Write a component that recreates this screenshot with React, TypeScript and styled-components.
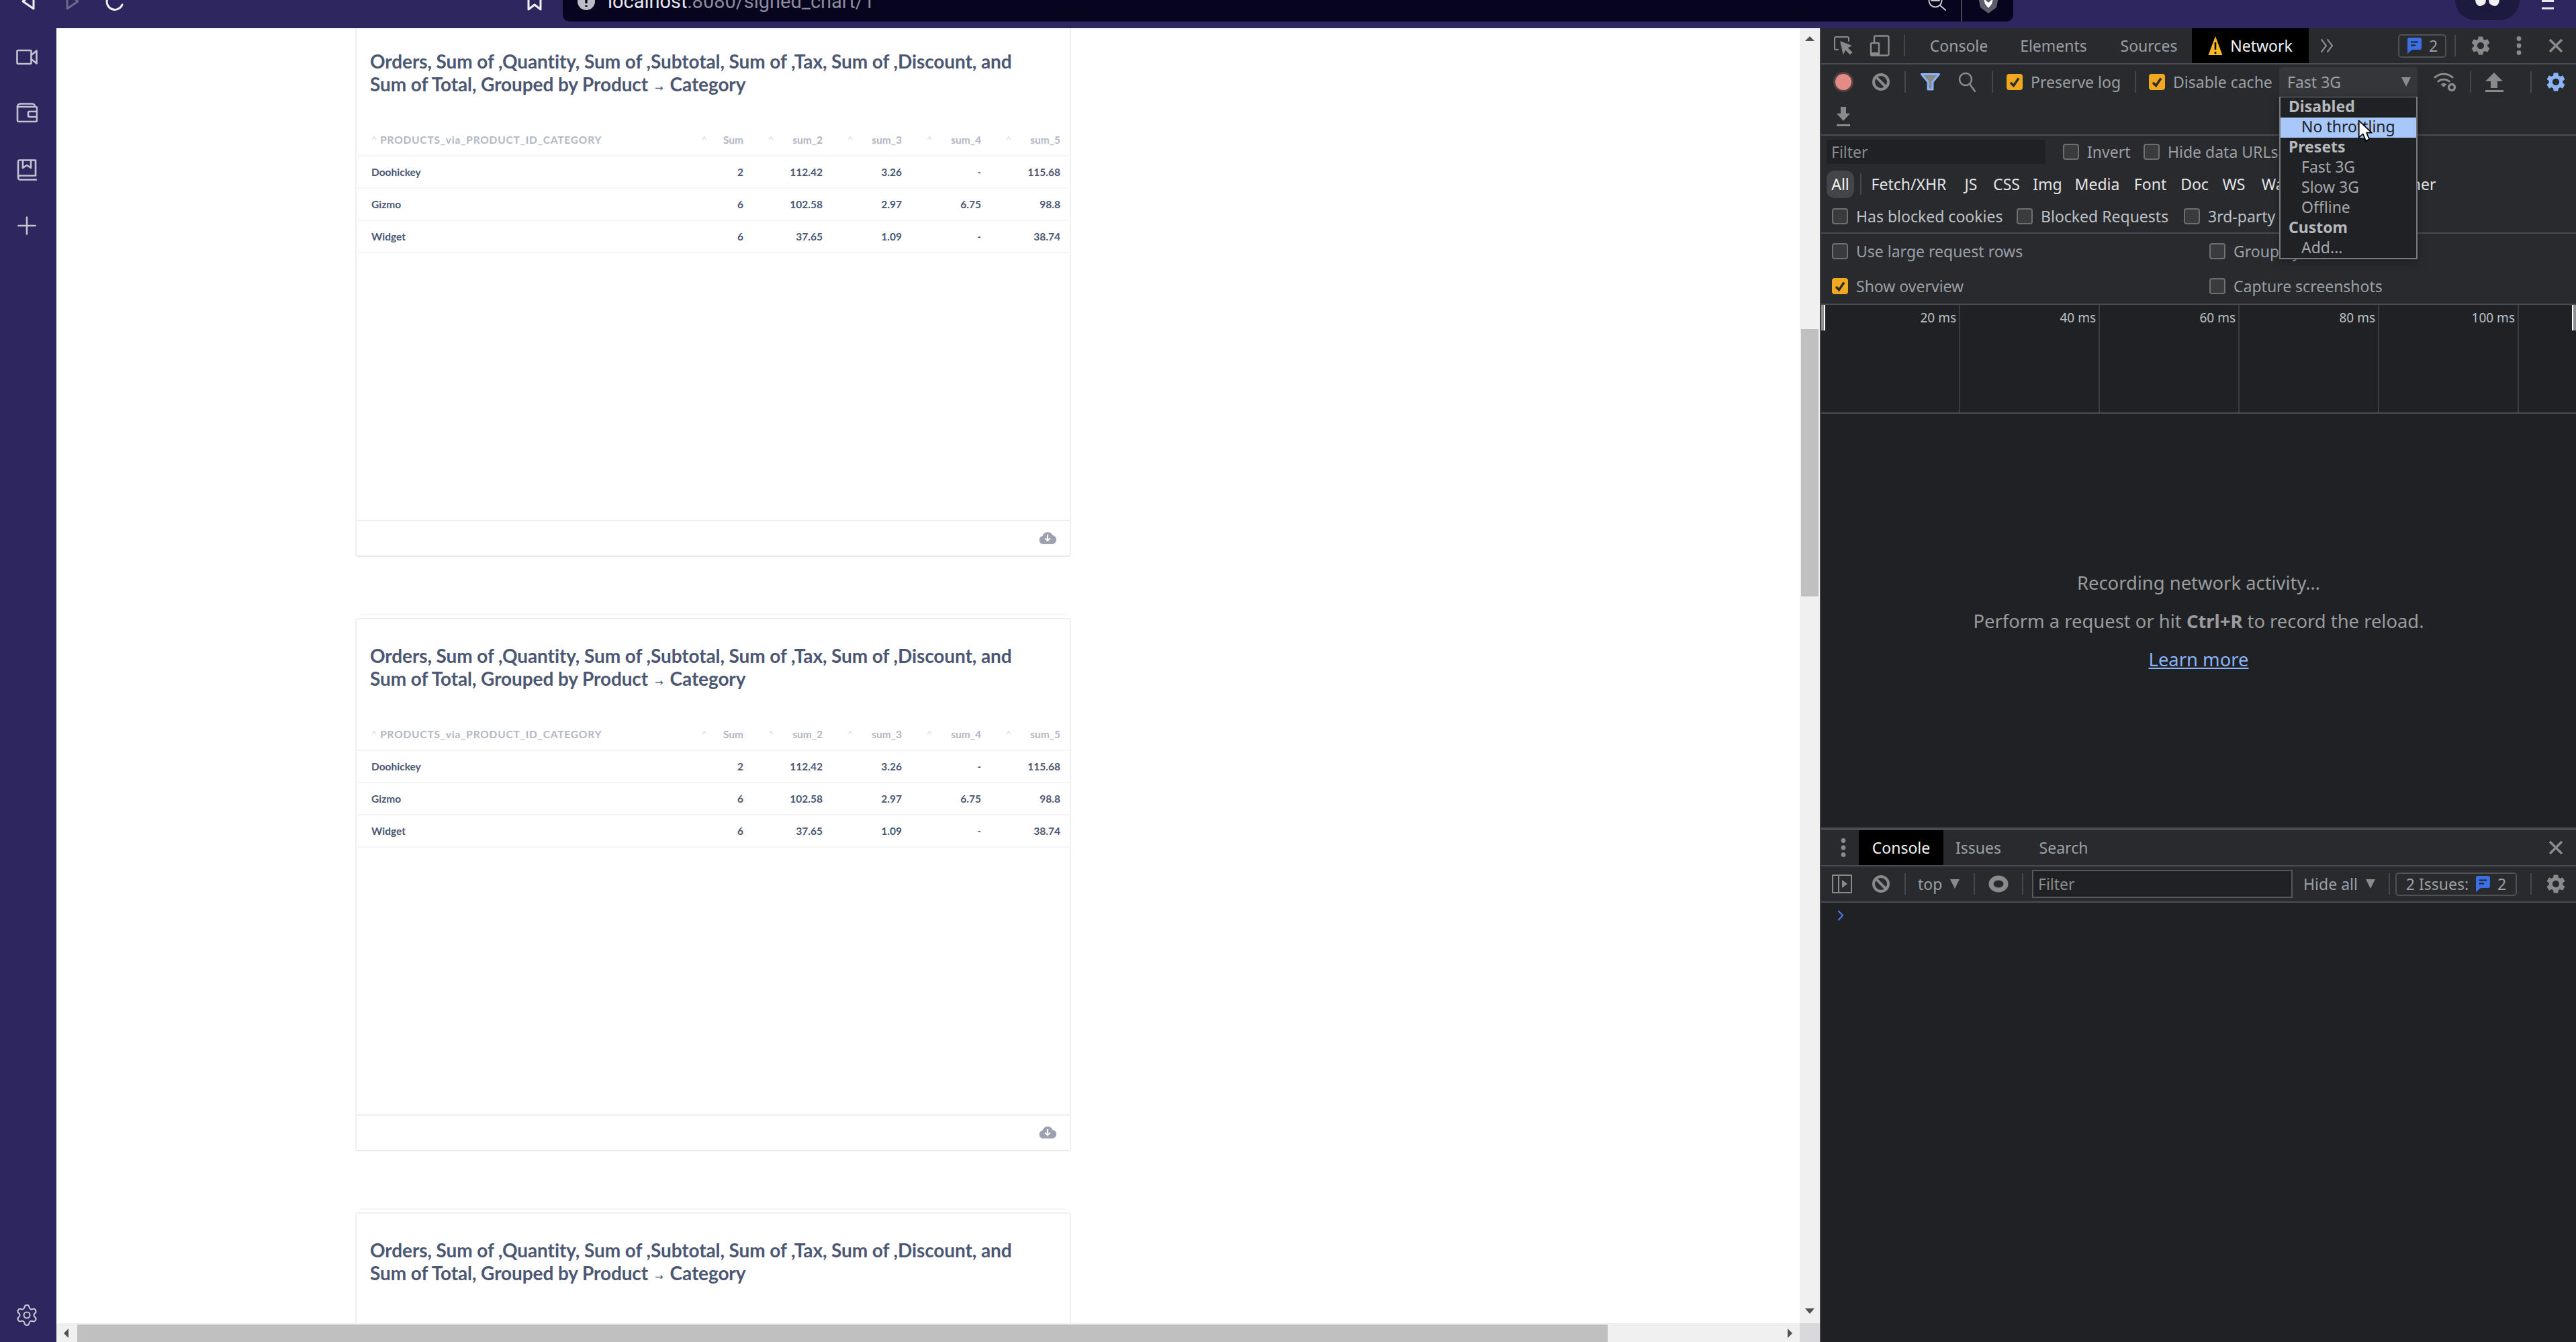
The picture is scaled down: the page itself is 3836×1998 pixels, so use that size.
import React from "react"
import styled, { createGlobalStyle } from "styled-components"
import { Settings } from "lucide-react"
import { MdSettings } from "react-icons/md"

const GlobalStyle = createGlobalStyle`
  html, body {
    margin: 0;
    padding: 0;
    overflow: hidden;
    background: #fff;
  }
  * { box-sizing: border-box; }
`

const Window = styled.div`
  width: 3836px;
  height: 1998px;
  display: flex;
  flex-direction: column;
  overflow: hidden;
  background: #2e265e;
  font-family: "Noto Sans", sans-serif;
`

/* browser chrome */
const TopBar = styled.div`
  height: 42px;
  flex-shrink: 0;
  display: flex;
  align-items: flex-start;
  overflow: hidden;
`
const NavIcon = styled.svg<{ $ml: number }>`
  margin-left: ${p => p.$ml}px;
  flex-shrink: 0;
  fill: none;
  stroke-width: 3;
  stroke-linejoin: round;
  stroke-linecap: round;
`
const AddressBar = styled.div`
  width: 2160px;
  height: 32px;
  margin-left: 31px;
  padding: 0 22px;
  flex-shrink: 0;
  display: flex;
  align-items: flex-start;
  background: #07041f;
  border-radius: 0 0 10px 10px;
`
const Url = styled.div`
  flex: 1;
  margin: -16px 0 0 19px;
  font-family: "Roboto", sans-serif;
  font-size: 29px;
  line-height: 36px;
  color: #8d8b9c;
  white-space: nowrap;
  b {
    font-weight: 400;
    color: #e6e6ec;
  }
`
const Profile = styled.div`
  width: 96px;
  height: 30px;
  margin-left: auto;
  flex-shrink: 0;
  display: flex;
  justify-content: center;
  background: #1c1a3e;
  border-radius: 0 0 32px 32px;
`
const Hamburger = styled.div`
  width: 18px;
  height: 14px;
  margin: 0 33px;
  flex-shrink: 0;
  border-top: 3px solid #e9e8ef;
  border-bottom: 3px solid #e9e8ef;
`

const Body = styled.div`
  flex: 1;
  display: flex;
  min-height: 0;
`

/* left rail */
const Sidebar = styled.div`
  width: 84px;
  flex-shrink: 0;
  display: flex;
  flex-direction: column;
  align-items: center;
  padding: 31px 4px 22px 0;
  color: #c4c2d0;
`
const RailIcon = styled.svg<{ $mt: number }>`
  margin-top: ${p => p.$mt}px;
  fill: none;
  stroke: currentColor;
  stroke-width: 2.6;
  stroke-linejoin: round;
  stroke-linecap: round;
`
const RailBottom = styled.div`
  margin-top: auto;
  height: 36px;
`

/* page */
const PageArea = styled.div`
  width: 2626px;
  flex-shrink: 0;
  display: flex;
  flex-direction: column;
`
const PageRow = styled.div`
  flex: 1;
  display: flex;
  min-height: 0;
`
const Viewport = styled.div`
  flex: 1;
  background: #fff;
  overflow: hidden;
  padding-left: 445px;
`
const Cards = styled.div`
  width: 1066px;
  margin-top: -7px;
  display: flex;
  flex-direction: column;
  gap: 91px;
`
const Card = styled.div`
  position: relative;
  height: 794px;
  flex-shrink: 0;
  display: flex;
  flex-direction: column;
  background: #fff;
  border: 2px solid #f0f0f2;
  border-bottom-color: #e9e9ec;
  border-radius: 4px;
  font-family: "Lato", sans-serif;
  &::before {
    content: "";
    position: absolute;
    top: -8px;
    left: 6px;
    right: 6px;
    height: 2px;
    background: #f5f5f6;
  }
`
const CardTitle = styled.h2`
  margin: 37px 0 43px;
  padding: 0 42px 0 20px;
  font-size: 28px;
  line-height: 34px;
  font-weight: 700;
  letter-spacing: -0.1px;
  color: #4c5773;
`
const Arrow = styled.span`
  font-family: "DejaVu Sans", sans-serif;
  font-size: 15px;
  line-height: 1;
  font-weight: 400;
  margin: 0 10px;
`
const TableRow = styled.div<{ $head?: boolean }>`
  height: 48px;
  flex-shrink: 0;
  display: grid;
  grid-template-columns: 436px repeat(5, 118px);
  align-items: center;
  padding: 0 14px 0 22px;
  border-bottom: 2px solid #f5f5f6;
  font-size: 15.5px;
  font-weight: 700;
  color: ${p => (p.$head ? "#b3b6c3" : "#4c5773")};
`
const Cell = styled.div<{ $left?: boolean }>`
  display: flex;
  justify-content: ${p => (p.$left ? "flex-start" : "flex-end")};
  white-space: nowrap;
`
const SortCaret = styled.span<{ $gap: number }>`
  margin-right: ${p => p.$gap}px;
  color: #d6d8df;
  font-size: 14px;
  font-weight: 400;
`
const NameHead = styled.span`
  letter-spacing: 0.8px;
`
const CardSpace = styled.div`
  flex: 1;
`
const CardFooter = styled.div`
  height: 53px;
  flex-shrink: 0;
  display: flex;
  align-items: center;
  justify-content: flex-end;
  padding: 0 20px 2px 0;
  border-top: 2px solid #eeeef0;
`

/* scrollbars */
const VScroll = styled.div`
  width: 30px;
  flex-shrink: 0;
  display: flex;
  flex-direction: column;
  align-items: center;
  background: #f0f0f0;
`
const VThumb = styled.div`
  width: 26px;
  height: 398px;
  margin-top: 429px;
  background: #c0c0c0;
`
const ScrollArrow = styled.svg<{ $mt?: number; $ml?: number }>`
  margin-top: ${p => p.$mt ?? 0}px;
  margin-left: ${p => p.$ml ?? 0}px;
  flex-shrink: 0;
  fill: #505050;
`
const HRow = styled.div`
  height: 28px;
  flex-shrink: 0;
  display: flex;
`
const HTrack = styled.div`
  flex: 1;
  display: flex;
  align-items: center;
  background: #f0f0f0;
`
const HThumb = styled.div`
  width: 2279px;
  height: 26px;
  margin: 2px 268px 0 13px;
  flex-shrink: 0;
  background: #c0c0c0;
`
const ScrollCorner = styled.div`
  width: 30px;
  background: #d9d9dc;
`

/* devtools */
const Devtools = styled.div`
  position: relative;
  width: 1126px;
  flex-shrink: 0;
  display: flex;
  flex-direction: column;
  overflow: hidden;
  border-left: 2px solid #3c3e42;
  background: #292a2d;
  color: #9aa0a6;
  font-size: 23px;
`
const Bar = styled.div<{ $h: number; $line?: number }>`
  height: ${p => p.$h + (p.$line ?? 0)}px;
  flex-shrink: 0;
  display: flex;
  align-items: center;
  border-bottom: ${p => p.$line ?? 0}px solid #494c50;
  white-space: nowrap;
`
const Slot = styled.div<{ $w: number; $ml?: number; $start?: boolean }>`
  width: ${p => p.$w}px;
  margin-left: ${p => p.$ml ?? 0}px;
  flex-shrink: 0;
  display: flex;
  align-items: center;
  justify-content: ${p => (p.$start ? "flex-start" : "center")};
`
const Tab = styled.div<{ $w: number; $active?: boolean }>`
  width: ${p => p.$w}px;
  height: 100%;
  flex-shrink: 0;
  display: flex;
  align-items: center;
  justify-content: center;
  gap: 11px;
  background: ${p => (p.$active ? "#000" : "transparent")};
  color: ${p => (p.$active ? "#f1f3f4" : "#9aa0a6")};
`
const Divider = styled.div<{ $ml?: number; $mr?: number }>`
  width: 2px;
  height: 32px;
  margin-left: ${p => p.$ml ?? 0}px;
  margin-right: ${p => p.$mr ?? 0}px;
  flex-shrink: 0;
  background: #45474b;
`
const Spacer = styled.div`
  flex: 1;
`
const IssueBadge = styled.div<{ $w: number; $ml?: number }>`
  width: ${p => p.$w}px;
  height: 35px;
  margin-left: ${p => p.$ml ?? 0}px;
  flex-shrink: 0;
  display: flex;
  align-items: center;
  justify-content: center;
  gap: 10px;
  border: 2px solid #4e5054;
  border-radius: 5px;
`
const CheckWrap = styled.div<{ $w: number; $ml?: number; $light?: boolean }>`
  width: ${p => p.$w}px;
  margin-left: ${p => p.$ml ?? 0}px;
  flex-shrink: 0;
  display: flex;
  align-items: center;
  gap: 12px;
  color: ${p => (p.$light ? "#bdc1c6" : "#9aa0a6")};
`
const CheckBox = styled.div<{ $on?: boolean }>`
  width: 24px;
  height: 24px;
  flex-shrink: 0;
  display: flex;
  align-items: center;
  justify-content: center;
  border-radius: 4px;
  border: 2px solid ${p => (p.$on ? "#f0a81e" : "#6f6f6f")};
  background: ${p => (p.$on ? "#f0a81e" : "#3a3b3d")};
`
const ThrottleSelect = styled.div`
  position: relative;
  width: 206px;
  height: 44px;
  flex-shrink: 0;
  padding: 0 10px 0 12px;
  display: flex;
  align-items: center;
  justify-content: space-between;
  border-radius: 4px 4px 0 0;
  background: #35363a;
`
const Popup = styled.div`
  position: absolute;
  top: 44px;
  left: 0;
  z-index: 10;
  width: 206px;
  height: 242px;
  background: #202124;
  border: 2px solid #77797d;
  border-top-width: 1px;
  box-shadow: 0 4px 12px rgba(0, 0, 0, 0.3);
`
const PopupItem = styled.div<{ $group?: boolean; $on?: boolean }>`
  height: 30px;
  line-height: 27px;
  padding-left: ${p => (p.$group ? 12 : 31)}px;
  font-weight: ${p => (p.$group ? 700 : 400)};
  color: ${p => (p.$on ? "#202124" : p.$group ? "#b6b8bb" : "#a4a7ab")};
  background: ${p => (p.$on ? "#a8c7fa" : "transparent")};
`
const Cursor = styled.svg`
  position: absolute;
  left: 3511px;
  top: 177px;
  z-index: 20;
`
const FilterBox = styled.div<{ $w: number; $ml: number; $h: number; $outlined?: boolean }>`
  width: ${p => p.$w}px;
  height: ${p => p.$h}px;
  margin-left: ${p => p.$ml}px;
  flex-shrink: 0;
  display: flex;
  align-items: center;
  padding-left: 7px;
  background: #202124;
  color: #8a8c90;
  border: ${p => (p.$outlined ? "2px solid #55575a" : "none")};
`
const AllPill = styled.div`
  width: 41px;
  height: 41px;
  margin-left: 8px;
  flex-shrink: 0;
  display: flex;
  align-items: center;
  justify-content: center;
  border-radius: 12px;
  background: #444547;
  color: #f1f3f4;
`
const TypeItem = styled.div<{ $w: number }>`
  width: ${p => p.$w}px;
  flex-shrink: 0;
  text-align: center;
  color: #e3e5e8;
`
const Timeline = styled.div`
  position: relative;
  height: 162px;
  flex-shrink: 0;
  display: flex;
  background: #202124;
  border-bottom: 2px solid #494c50;
`
const TimeCell = styled.div<{ $w: number; $last?: boolean }>`
  width: ${p => p.$w}px;
  flex-shrink: 0;
  padding: 5px 4px 0 0;
  line-height: 28px;
  font-size: 19px;
  text-align: right;
  color: #bdc1c6;
  border-right: ${p => (p.$last ? "none" : "2px solid #3a3c40")};
`
const Handle = styled.div<{ $side: "left" | "right" }>`
  position: absolute;
  top: 0;
  ${p => p.$side}: 0;
  width: 6px;
  height: 38px;
  background: #8f8f8f;
  border-${p => (p.$side === "left" ? "right" : "left")}: 2px solid #fff;
`
const EmptyPane = styled.div`
  height: 620px;
  flex-shrink: 0;
  display: flex;
  flex-direction: column;
  align-items: center;
  justify-content: center;
  background: #202124;
  border-bottom: 4px solid #494c50;
  color: #9a9c9f;
  font-size: 27.4px;
  line-height: 57px;
  b {
    font-weight: 700;
  }
`
const LearnMore = styled.a`
  color: #8ab4f8;
  text-decoration: underline;
`
const ConsolePane = styled.div`
  flex: 1;
  display: flex;
  align-items: flex-start;
  padding: 11px 0 0 24px;
  background: #202124;
`

/* small drawings */
const ToolIcon = styled.svg`
  flex-shrink: 0;
  fill: none;
  stroke: #8a8a8a;
  stroke-linecap: round;
  stroke-linejoin: round;
`
const Triangle = styled.div<{ $ml?: number }>`
  margin-left: ${p => p.$ml ?? 0}px;
  flex-shrink: 0;
  border-left: 7px solid transparent;
  border-right: 7px solid transparent;
  border-top: 14px solid #8a8a8a;
`
const RecordDot = styled.div`
  width: 24px;
  height: 24px;
  border-radius: 50%;
  background: #e48b85;
  box-shadow: 0 0 0 3px rgba(228, 139, 133, 0.25);
`

const Tick = () => (
  <svg width="18" height="18" viewBox="0 0 18 18" fill="none" stroke="#2b2c2f" strokeWidth="3.4">
    <path d="M3 10 L7.5 14.5 L15 3.5" />
  </svg>
)

const Check = (p: { label: string; w: number; ml?: number; on?: boolean; light?: boolean }) => (
  <CheckWrap $w={p.w} $ml={p.ml} $light={p.light}>
    <CheckBox $on={p.on}>{p.on && <Tick />}</CheckBox>
    {p.label}
  </CheckWrap>
)

const BlockIcon = () => (
  <ToolIcon width="28" height="28" viewBox="0 0 28 28" strokeWidth="4">
    <circle cx="14" cy="14" r="11" />
    <path d="M6.5 6.5 L21.5 21.5" strokeLinecap="butt" />
  </ToolIcon>
)

const CloseIcon = () => (
  <ToolIcon width="22" height="22" viewBox="0 0 22 22" strokeWidth="3.6">
    <path d="M2 2 L20 20 M20 2 L2 20" strokeLinecap="butt" />
  </ToolIcon>
)

const DotsIcon = () => (
  <svg width="8" height="28" viewBox="0 0 8 28" fill="#8a8a8a">
    <circle cx="4" cy="3.5" r="3.4" />
    <circle cx="4" cy="14" r="3.4" />
    <circle cx="4" cy="24.5" r="3.4" />
  </svg>
)

const MessageIcon = () => (
  <svg width="23" height="26" viewBox="0 0 23 26">
    <path d="M4 1 H19 a3 3 0 0 1 3 3 V16 a3 3 0 0 1-3 3 H8 L1 25 V4 a3 3 0 0 1 3-3 Z" fill="#3b6fe3" />
    <path d="M6 7.5 H17 M6 12.5 H13" stroke="#202124" strokeWidth="2.2" />
  </svg>
)

const Gear = (p: { color?: string }) => <MdSettings size={34} color={p.color ?? "#8a8a8a"} />

const chartRows = [
  ["Doohickey", "2", "112.42", "3.26", "-", "115.68"],
  ["Gizmo", "6", "102.58", "2.97", "6.75", "98.8"],
  ["Widget", "6", "37.65", "1.09", "-", "38.74"],
]
const chartHead = [
  { name: "Sum", gap: 24 },
  { name: "sum_2", gap: 28 },
  { name: "sum_3", gap: 28 },
  { name: "sum_4", gap: 28 },
  { name: "sum_5", gap: 28 },
]

const ChartCard = () => (
  <Card>
    <CardTitle>
      Orders, Sum of ,Quantity, Sum of ,Subtotal, Sum of ,Tax, Sum of ,Discount, and Sum of Total, Grouped by Product
      <Arrow>→</Arrow>Category
    </CardTitle>
    <TableRow $head>
      <Cell $left>
        <SortCaret $gap={5}>^</SortCaret>
        <NameHead>PRODUCTS_via_PRODUCT_ID_CATEGORY</NameHead>
      </Cell>
      {chartHead.map(h => (
        <Cell key={h.name}>
          <SortCaret $gap={h.gap}>^</SortCaret>
          {h.name}
        </Cell>
      ))}
    </TableRow>
    {chartRows.map(row => (
      <TableRow key={row[0]}>
        {row.map((v, i) => (
          <Cell key={i} $left={i === 0}>
            {v}
          </Cell>
        ))}
      </TableRow>
    ))}
    <CardSpace />
    <CardFooter>
      <svg width="26" height="19" viewBox="0 0 26 19">
        <path d="M6.5 19 a6 6 0 0 1-1-11.9 a8 8 0 0 1 15-1.2 a6.6 6.6 0 0 1-.5 13.1 Z" fill="#9ca0af" />
        <path d="M13 5 V14 M9.2 10.4 L13 14.2 L16.8 10.4" stroke="#fff" strokeWidth="2" fill="none" />
      </svg>
    </CardFooter>
  </Card>
)

const timeCells = [
  { w: 207, t: "20 ms" },
  { w: 208, t: "40 ms" },
  { w: 208, t: "60 ms" },
  { w: 208, t: "80 ms" },
  { w: 208, t: "100 ms" },
]

const App = () => {
  return (
    <Window>
      <GlobalStyle />
      <TopBar>
        <NavIcon $ml={32} width="20" height="16" viewBox="0 0 20 16" stroke="#f1f0f5">
          <path d="M18 -10 V13 L2 2 Z" />
        </NavIcon>
        <NavIcon $ml={46} width="20" height="16" viewBox="0 0 20 16" stroke="#6d6888">
          <path d="M2 -10 V13 L18 2 Z" />
        </NavIcon>
        <NavIcon $ml={39} width="28" height="16" viewBox="0 0 28 16" stroke="#f1f0f5">
          <path d="M3 -2 A11.5 11.5 0 0 0 25 7" />
        </NavIcon>
        <NavIcon $ml={600} width="22" height="16" viewBox="0 0 22 16" stroke="#f1f0f5">
          <path d="M2 -10 V14 L11 7 L20 14 V-10" />
        </NavIcon>
        <AddressBar>
          <svg width="26" height="15" viewBox="0 0 26 15">
            <circle cx="13" cy="2" r="13" fill="#bdbcc6" />
            <path d="M13 -2 V5 M13 8 V10" stroke="#07041f" strokeWidth="3.4" />
          </svg>
          <Url>
            <b>localhost</b>:8080/signed_chart/1
          </Url>
          <NavIcon $ml={0} width="30" height="16" viewBox="0 0 30 16" stroke="#c8c7d0" style={{ strokeWidth: 2 }}>
            <circle cx="12" cy="1" r="9.5" />
            <path d="M6 1 H18 M19 8 L27 15" />
          </NavIcon>
          <Divider $ml={20} />
          <svg width="30" height="20" viewBox="0 0 30 20" style={{ marginLeft: 24, flexShrink: 0 }}>
            <path d="M0 -4 H30 L27 11 L15 20 L3 11 Z" fill="#5e5c6b" />
            <path d="M8 -2 L15 4 L22 -2 L20 6 L15 12 L10 6 Z" fill="#fff" />
          </svg>
        </AddressBar>
        <Profile>
          <svg width="36" height="9" viewBox="0 0 36 9" fill="#f2f2f2">
            <path d="M0 0 H16 L15 5 Q11 9 6 9 Q1 8 0 0 Z M20 0 H36 Q35 8 30 9 Q25 9 21 5 Z" />
          </svg>
        </Profile>
        <Hamburger />
      </TopBar>
      <Body>
        <Sidebar>
          <RailIcon $mt={0} width="32" height="24" viewBox="0 0 32 24">
            <rect x="1.5" y="2" width="21" height="20" rx="1.5" />
            <path d="M22.5 9 L30.5 2.5 V21.5 L22.5 15" />
          </RailIcon>
          <RailIcon $mt={56} width="32" height="30" viewBox="0 0 32 30">
            <path d="M2 5.5 A4 4 0 0 1 6 1.5 H24 A4 4 0 0 1 28 5.5" />
            <path d="M2 5.5 V26 A2 2 0 0 0 4 28 H29 A2 2 0 0 0 31 26 V8 A2 2 0 0 0 29 6 H2" />
            <path d="M31 13 H20 A2 2 0 0 0 18 15 V19 A2 2 0 0 0 20 21 H31" />
          </RailIcon>
          <RailIcon $mt={54} width="30" height="32" viewBox="0 0 30 32">
            <path d="M2 27 V3.5 A2 2 0 0 1 4 1.5 H28 V24.5 H5 A3 3 0 0 0 5 30.5 H29" />
            <path d="M9 2 V13 L15 9 L21 13 V2" />
          </RailIcon>
          <RailIcon $mt={53} width="28" height="28" viewBox="0 0 28 28">
            <path d="M14 1.5 V26.5 M1.5 14 H26.5" />
          </RailIcon>
          <RailBottom>
            <Settings size={36} strokeWidth={1.4} />
          </RailBottom>
        </Sidebar>
        <PageArea>
          <PageRow>
            <Viewport>
              <Cards>
                <ChartCard />
                <ChartCard />
                <ChartCard />
              </Cards>
            </Viewport>
            <VScroll>
              <ScrollArrow $mt={12} width="14" height="7" viewBox="0 0 14 7">
                <path d="M7 0 L14 7 H0 Z" />
              </ScrollArrow>
              <VThumb />
              <ScrollArrow $mt={1060} width="14" height="8" viewBox="0 0 14 8">
                <path d="M0 0 H14 L7 8 Z" />
              </ScrollArrow>
            </VScroll>
          </PageRow>
          <HRow>
            <HTrack>
              <ScrollArrow $mt={2} $ml={11} width="7" height="14" viewBox="0 0 7 14">
                <path d="M7 0 V14 L0 7 Z" />
              </ScrollArrow>
              <HThumb />
              <ScrollArrow $mt={2} width="7" height="14" viewBox="0 0 7 14">
                <path d="M0 0 L7 7 L0 14 Z" />
              </ScrollArrow>
            </HTrack>
            <ScrollCorner />
          </HRow>
        </PageArea>
        <Devtools>
          <Bar $h={52} $line={2}>
            <Slot $w={66}>
              <ToolIcon width="30" height="30" viewBox="0 0 30 30" strokeWidth="2">
                <path d="M7 21 H4 A2 2 0 0 1 2 19 V4 A2 2 0 0 1 4 2 H21 A2 2 0 0 1 23 4 V8" />
                <path d="M11 9 L27 15 L21 18 L28 25 L25 28 L18 21 L15 27 Z" fill="#8a8a8a" strokeWidth="1" />
              </ToolIcon>
            </Slot>
            <Slot $w={42}>
              <ToolIcon width="30" height="32" viewBox="0 0 30 32" strokeWidth="2.4">
                <path d="M7 12 V3 A2 2 0 0 1 9 1.5 H27 A2 2 0 0 1 28.5 3 V29 A2 2 0 0 1 27 30.5 H13" />
                <rect x="2" y="12" width="12" height="18.5" rx="1.5" />
                <rect x="2" y="26" width="12" height="5" fill="#8a8a8a" stroke="none" />
              </ToolIcon>
            </Slot>
            <Divider $ml={15} $mr={17} />
            <Tab $w={126}>Console</Tab>
            <Tab $w={156}>Elements</Tab>
            <Tab $w={128}>Sources</Tab>
            <Tab $w={174} $active>
              <svg width="22" height="30" viewBox="0 0 22 30">
                <path d="M11 1 L21.5 29 H0.5 Z" fill="#f8ba22" />
                <path d="M11 10 V21 M11 24 V27" stroke="#000" strokeWidth="2.6" />
              </svg>
              Network
            </Tab>
            <Slot $w={54}>
              <ToolIcon width="20" height="22" viewBox="0 0 20 22" strokeWidth="2.2">
                <path d="M2 2 L9 11 L2 20 M11 2 L18 11 L11 20" />
              </ToolIcon>
            </Slot>
            <Spacer />
            <IssueBadge $w={72}>
              <MessageIcon />2
            </IssueBadge>
            <Divider $ml={12} />
            <Slot $w={64} $ml={5}>
              <Gear />
            </Slot>
            <Slot $w={50}>
              <DotsIcon />
            </Slot>
            <Slot $w={60}>
              <CloseIcon />
            </Slot>
          </Bar>
          <Bar $h={52}>
            <Slot $w={66}>
              <RecordDot />
            </Slot>
            <Slot $w={46}>
              <BlockIcon />
            </Slot>
            <Divider $ml={12} />
            <Slot $w={72}>
              <svg width="29" height="26" viewBox="0 0 29 26">
                <path d="M1.5 1.5 H27.5 L18 13 V24 H11 V13 Z" fill="#8a8a8a" stroke="#8ab4f8" strokeWidth="3" strokeLinejoin="round" />
              </svg>
            </Slot>
            <Slot $w={38}>
              <ToolIcon width="26" height="30" viewBox="0 0 26 30" strokeWidth="2.6">
                <circle cx="11" cy="11" r="9" />
                <path d="M17 18 L25 29" />
              </ToolIcon>
            </Slot>
            <Divider $ml={18} />
            <Check label="Preserve log" on w={191} ml={20} />
            <Divider />
            <Check label="Disable cache" on w={194} ml={19} />
            <ThrottleSelect>
              Fast 3G
              <Triangle />
              <Popup>
                <PopupItem $group>Disabled</PopupItem>
                <PopupItem $on>No throttling</PopupItem>
                <PopupItem $group>Presets</PopupItem>
                <PopupItem>Fast 3G</PopupItem>
                <PopupItem>Slow 3G</PopupItem>
                <PopupItem>Offline</PopupItem>
                <PopupItem $group>Custom</PopupItem>
                <PopupItem>Add...</PopupItem>
              </Popup>
            </ThrottleSelect>
            <Slot $w={72} $ml={6}>
              <ToolIcon width="36" height="32" viewBox="0 0 36 32" strokeWidth="3">
                <path d="M2 9 A20 20 0 0 1 28 9 M7 15 A13 13 0 0 1 23 15" />
                <path d="M15 24 L10.5 19.5 A6.5 6.5 0 0 1 19.5 19.5 Z" fill="#8a8a8a" stroke="none" />
                <circle cx="27" cy="24" r="4.5" strokeWidth="3.4" strokeDasharray="3 1" />
              </ToolIcon>
            </Slot>
            <Divider />
            <Slot $w={68}>
              <svg width="28" height="30" viewBox="0 0 28 30" fill="#8a8a8a">
                <path d="M14 1 L27 14 H19 V24 H9 V14 H1 Z" />
                <rect x="1" y="27" width="27" height="3" />
              </svg>
            </Slot>
            <Divider $ml={20} />
            <Slot $w={60} $ml={6}>
              <Gear color="#8ab4f8" />
            </Slot>
          </Bar>
          <Bar $h={52} $line={2}>
            <Slot $w={66}>
              <svg width="22" height="30" viewBox="0 0 22 30" fill="#8a8a8a">
                <path d="M7 0 H15 V10 H21 L11 21 L1 10 H7 Z" />
                <rect x="1" y="26" width="20" height="3" />
              </svg>
            </Slot>
          </Bar>
          <Bar $h={48}>
            <FilterBox $w={326} $ml={8} $h={36}>
              Filter
            </FilterBox>
            <Check label="Invert" w={120} ml={26} />
            <Check label="Hide data URLs" w={200} />
          </Bar>
          <Bar $h={48}>
            <AllPill>All</AllPill>
            <Divider $ml={9} />
            <TypeItem $w={141}>Fetch/XHR</TypeItem>
            <TypeItem $w={44}>JS</TypeItem>
            <TypeItem $w={62}>CSS</TypeItem>
            <TypeItem $w={60}>Img</TypeItem>
            <TypeItem $w={88}>Media</TypeItem>
            <TypeItem $w={70}>Font</TypeItem>
            <TypeItem $w={62}>Doc</TypeItem>
            <TypeItem $w={55}>WS</TypeItem>
            <TypeItem $w={94}>Wasm</TypeItem>
            <TypeItem $w={100}>Manifest</TypeItem>
            <TypeItem $w={96}>Other</TypeItem>
          </Bar>
          <Bar $h={48} $line={2}>
            <Check label="Has blocked cookies" w={275} ml={16} light />
            <Check label="Blocked Requests" w={249} light />
            <Check label="3rd-party requests" w={300} light />
          </Bar>
          <Bar $h={52}>
            <Check label="Use large request rows" w={562} ml={16} />
            <Check label="Group by frame" w={300} />
          </Bar>
          <Bar $h={52} $line={2}>
            <Check label="Show overview" on w={562} ml={16} />
            <Check label="Capture screenshots" w={300} />
          </Bar>
          <Timeline>
            {timeCells.map(c => (
              <TimeCell key={c.t} $w={c.w}>
                {c.t}
              </TimeCell>
            ))}
            <TimeCell $w={85} $last />
            <Handle $side="left" />
            <Handle $side="right" />
          </Timeline>
          <EmptyPane>
            <div>Recording network activity…</div>
            <div>
              Perform a request or hit <b>Ctrl+R</b> to record the reload.
            </div>
            <LearnMore>Learn more</LearnMore>
          </EmptyPane>
          <Bar $h={52} $line={2}>
            <Slot $w={46} $ml={10}>
              <DotsIcon />
            </Slot>
            <Tab $w={126} $active>
              Console
            </Tab>
            <Tab $w={104}>Issues</Tab>
            <Tab $w={150}>Search</Tab>
            <Spacer />
            <Slot $w={60}>
              <CloseIcon />
            </Slot>
          </Bar>
          <Bar $h={52} $line={2}>
            <Slot $w={62}>
              <ToolIcon width="30" height="28" viewBox="0 0 30 28" strokeWidth="2">
                <rect x="1" y="1" width="28" height="26" />
                <path d="M10 1 V27" />
                <path d="M15 8 L23 14 L15 20 Z" fill="#8a8a8a" stroke="none" />
              </ToolIcon>
            </Slot>
            <Slot $w={54}>
              <BlockIcon />
            </Slot>
            <Divider $ml={8} />
            <Slot $w={83} $ml={18} $start>
              top
              <Triangle $ml={12} />
            </Slot>
            <Divider />
            <Slot $w={70}>
              <ToolIcon width="32" height="26" viewBox="0 0 32 26" strokeWidth="7">
                <ellipse cx="16" cy="13" rx="11" ry="9" />
              </ToolIcon>
            </Slot>
            <Divider />
            <FilterBox $w={388} $ml={13} $h={42} $outlined>
              Filter
            </FilterBox>
            <Slot $w={107} $ml={16}>
              Hide all
              <Triangle $ml={12} />
            </Slot>
            <Divider $ml={20} />
            <IssueBadge $w={181} $ml={8}>
              2 Issues:
              <MessageIcon />2
            </IssueBadge>
            <Divider $ml={20} />
            <Slot $w={60} $ml={6}>
              <Gear />
            </Slot>
          </Bar>
          <ConsolePane>
            <svg width="10" height="16" viewBox="0 0 10 16" fill="none" stroke="#4a7ff0" strokeWidth="2">
              <path d="M1.5 1 L8 8 L1.5 15" />
            </svg>
          </ConsolePane>
        </Devtools>
      </Body>
      <Cursor width="26" height="38" viewBox="0 0 30 40">
        <path d="M2 1 V30 L9 24 L14 36 L20 33 L15 22 L24 22 Z" fill="#fff" stroke="#000" strokeWidth="2" strokeLinejoin="round" />
      </Cursor>
    </Window>
  )
}

export default App
